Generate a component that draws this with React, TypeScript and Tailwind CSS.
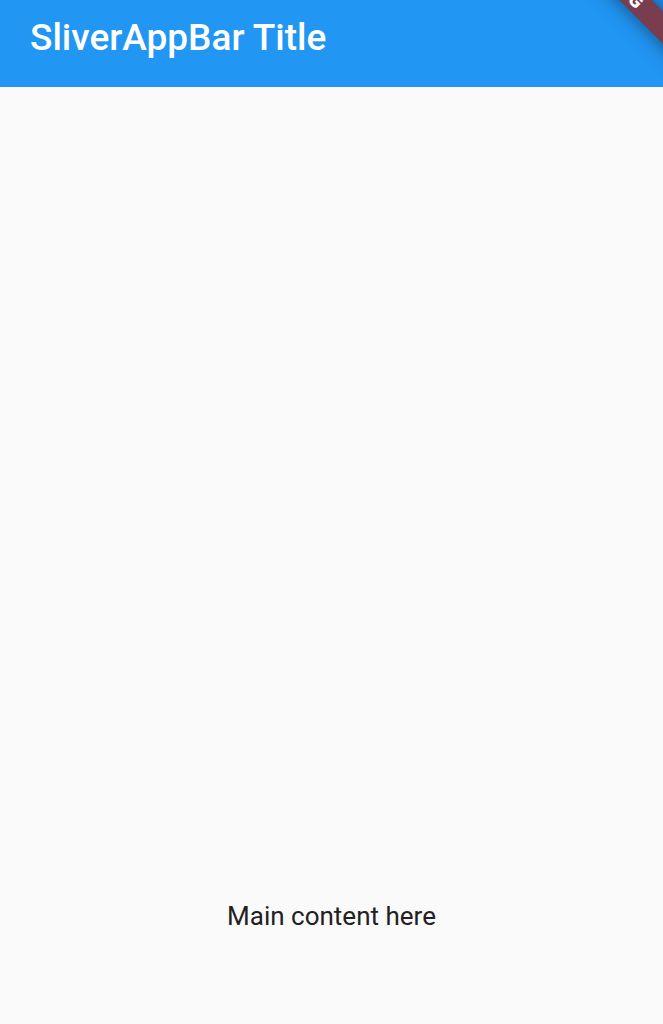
function DebugBanner() {
  return (
    <div className="pointer-events-none absolute top-0 right-0 h-32 w-32 overflow-hidden" aria-hidden="true">
      <div className="absolute -top-7 -right-[76px] flex h-[23px] w-60 rotate-45 items-center justify-center bg-[#7a3d50] text-[19px] leading-none font-black text-white shadow-[0_0_20px_rgba(0,0,0,0.5)]">
        DEBUG
      </div>
    </div>
  )
}

export default function App() {
  return (
    <div className="relative flex min-h-screen flex-col overflow-hidden bg-[#fafafa] font-['Roboto',sans-serif] antialiased">
      <header className="bg-[#2196f3] px-[30px] pt-3 pb-6">
        <h1 className="text-[37px] leading-[51px] font-medium text-white">SliverAppBar Title</h1>
      </header>
      <main className="flex flex-1 items-end justify-center pb-[92px]">
        <p className="text-[26px] leading-8 text-[#212121]">Main content here</p>
      </main>
      <DebugBanner />
    </div>
  )
}
